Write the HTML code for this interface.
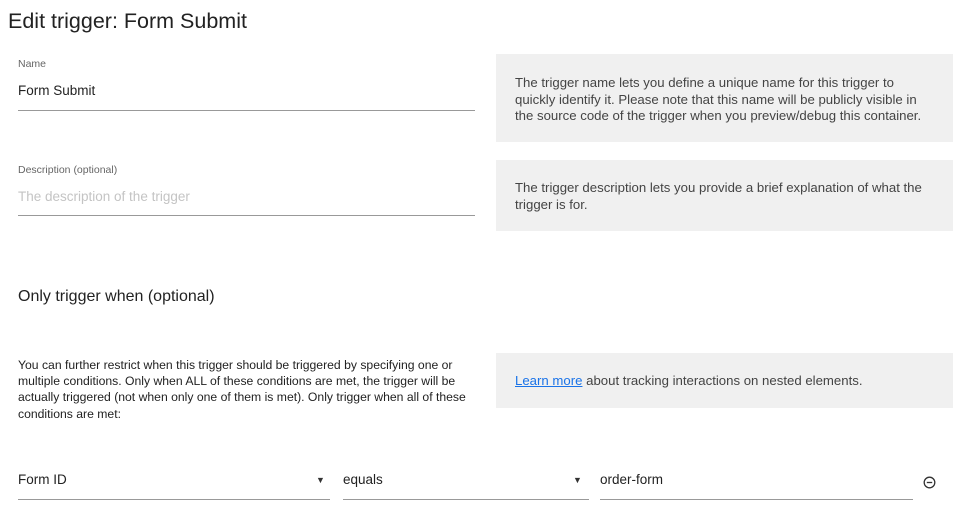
<!DOCTYPE html>
<html><head><meta charset="utf-8"><style>
body{margin:0;width:967px;height:528px;background:#fff;font-family:"Liberation Sans",sans-serif;color:#222;position:relative;overflow:hidden}
.a{position:absolute;white-space:nowrap}
.box{position:absolute;background:#f0f0f0;left:496px;width:457px}
.line{position:absolute;height:1px;background:#999}
.bt{position:absolute;left:19px;font-size:13.2px;line-height:16.5px;color:#444;white-space:nowrap}
</style></head><body>
<div class="a" style="left:8px;top:9px;font-size:21.5px;color:#222">Edit trigger: Form Submit</div>

<div class="a" style="left:18px;top:58px;font-size:10.5px;color:#666">Name</div>
<div class="a" style="left:18px;top:83px;font-size:13.5px;color:#222">Form Submit</div>
<div class="line" style="left:18px;top:110px;width:457px"></div>
<div class="box" style="top:54px;height:88px"><div class="bt" style="top:21px">The trigger name lets you define a unique name for this trigger to<br>quickly identify it. Please note that this name will be publicly visible in<br>the source code of the trigger when you preview/debug this container.</div></div>

<div class="a" style="left:18px;top:164px;font-size:10.5px;color:#666">Description (optional)</div>
<div class="a" style="left:18px;top:189px;font-size:13.5px;color:#c4c4c4">The description of the trigger</div>
<div class="line" style="left:18px;top:215px;width:457px"></div>
<div class="box" style="top:160px;height:71px"><div class="bt" style="top:20px">The trigger description lets you provide a brief explanation of what the<br>trigger is for.</div></div>

<div class="a" style="left:18px;top:288px;font-size:16px;color:#222">Only trigger when (optional)</div>
<div class="a" style="left:18px;top:357px;font-size:12.2px;line-height:16.2px;color:#222">You can further restrict when this trigger should be triggered by specifying one or<br>multiple conditions. Only when ALL of these conditions are met, the trigger will be<br>actually triggered (not when only one of them is met). Only trigger when all of these<br>conditions are met:</div>
<div class="box" style="top:353px;height:55px"><div class="bt" style="top:20px"><span style="color:#1a73e8;text-decoration:underline">Learn more</span> about tracking interactions on nested elements.</div></div>

<div class="a" style="left:18px;top:472px;font-size:13.5px">Form ID</div>
<div class="a" style="left:316px;top:475px;font-size:9px;color:#333">▼</div>
<div class="line" style="left:18px;top:499px;width:312px"></div>
<div class="a" style="left:343px;top:472px;font-size:13.5px">equals</div>
<div class="a" style="left:573px;top:475px;font-size:9px;color:#333">▼</div>
<div class="line" style="left:343px;top:499px;width:246px"></div>
<div class="a" style="left:600px;top:472px;font-size:13.5px">order-form</div>
<div class="line" style="left:600px;top:499px;width:313px"></div>
<svg class="a" style="left:923px;top:476px" width="13" height="13" viewBox="0 0 13 13"><circle cx="6.5" cy="6.5" r="5.3" fill="none" stroke="#333" stroke-width="1.3"/><line x1="3.8" y1="6.5" x2="9.2" y2="6.5" stroke="#333" stroke-width="1.3"/></svg>
</body></html>
